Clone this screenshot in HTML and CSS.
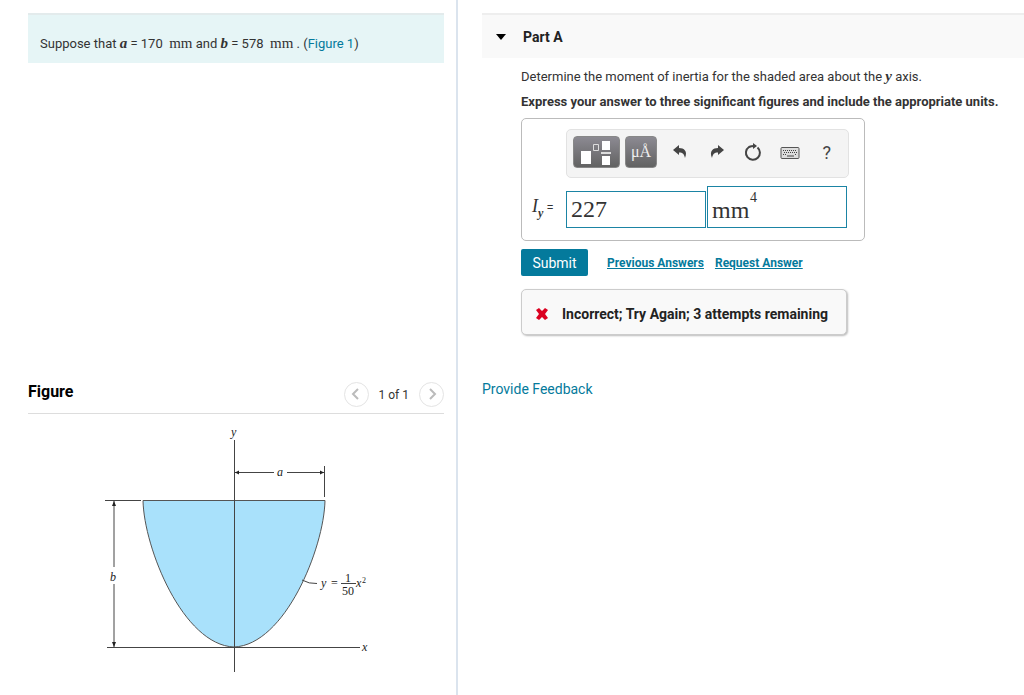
FILE: index.html
```html
<!DOCTYPE html>
<html lang="en">
<head>
  <meta charset="UTF-8">
  <meta name="viewport" content="width=device-width, initial-scale=1.0">
  <title>Moment of Inertia - Part A</title>
  <link rel="stylesheet" href="styles.css">
</head>
<body>
  <div class="page">
    <section class="left">
      <p class="problem">Suppose that <i class="var">a</i> = 170 &nbsp;<span class="unit">mm</span> and <i class="var">b</i> = 578 &nbsp;<span class="unit">mm</span> . (<a href="#figure">Figure 1</a>)</p>

      <div class="figure" id="figure">
        <div class="figure-header">
          <h2>Figure</h2>
          <div class="pager">
            <button type="button" aria-label="Previous figure">
              <svg width="10" height="12" viewBox="0 0 10 12"><path d="M7 1 L2 6 L7 11"/></svg>
            </button>
            <span>1 of 1</span>
            <button type="button" aria-label="Next figure">
              <svg width="10" height="12" viewBox="0 0 10 12"><path d="M3 1 L8 6 L3 11"/></svg>
            </button>
          </div>
        </div>

        <svg class="diagram" viewBox="0 0 416 275">
          <!-- shaded area -->
          <path class="area" d="M115 86.500 C116 134 155 231 206 233 C257 231 296 134 297 86.500 Z"/>
          <!-- axes -->
          <path class="line" d="M206.500 26 V258 M79 233.500 H332"/>
          <!-- dimension a -->
          <path class="line" d="M207 58.500 H246 M259 58.500 H297 M296.500 52 V83"/>
          <path class="tip" d="M207 58.500 l4 -2 v4 z M296 58.500 l-4 -2 v4 z"/>
          <!-- dimension b -->
          <path class="line" d="M77 86.500 H113 M86 87 V153 M86 170 V233"/>
          <path class="tip" d="M86 87 l-2 5 h4 z M86 233 l-2 -5 h4 z"/>
          <!-- leader to the equation -->
          <path class="line" d="M274 166 Q281 170 289 169.500"/>
          <text class="it" x="203" y="22">y</text>
          <text class="it" x="249" y="62">a</text>
          <text class="it" x="82" y="167">b</text>
          <text class="it" x="334" y="237">x</text>
          <text class="it" x="293" y="173">y</text>
          <text x="303" y="173">=</text>
          <text x="317" y="168">1</text>
          <path class="line" d="M313 169.500 H328"/>
          <text x="314" y="181">50</text>
          <text class="it" x="328" y="173">x</text>
          <text class="sup" x="334" y="169">2</text>
        </svg>
      </div>
    </section>

    <section class="right">
      <h2 class="part-header">
        <svg width="10" height="6" viewBox="0 0 10 6"><path d="M0 0 H10 L5 6 Z"/></svg>
        Part A
      </h2>

      <form class="part" onsubmit="return false">
        <p>Determine the moment of inertia for the shaded area about the <i class="var">y</i> axis.</p>
        <p class="instructions">Express your answer to three significant figures and include the appropriate units.</p>

        <div class="answer-box">
          <label class="answer-label" for="value"><i>I<sub>y</sub></i> =</label>
          <div class="toolbar">
            <button type="button" class="dark wide" aria-label="Templates">
              <svg width="32" height="26" viewBox="0 0 32 26">
                <path fill="#fff" d="M0 12 h10 v13 h-10 z M21 2 h8 v9 h-8 z M21 17 h8 v9 h-8 z"/>
                <path fill="#ddd" d="M20 13 h10 v2 h-10 z"/>
                <path fill="none" stroke="#ddd" d="M12.500 5.500 h5 v6 h-5 z"/>
              </svg>
            </button>
            <button type="button" class="dark units" aria-label="Units">μÅ</button>
            <button type="button" class="tool" aria-label="Undo">
              <svg width="18" height="18" viewBox="0 0 18 18"><path d="M2 7 L8 2 V5 C13 5 17 8 14 15 C13 11 12 9.500 8 9.500 V12 Z"/></svg>
            </button>
            <button type="button" class="tool" aria-label="Redo">
              <svg width="18" height="18" viewBox="0 0 18 18"><path d="M16 7 L10 2 V5 C5 5 1 8 4 15 C5 11 6 9.500 10 9.500 V12 Z"/></svg>
            </button>
            <button type="button" class="tool" aria-label="Reset">
              <svg width="18" height="18" viewBox="0 0 18 18"><path class="ring" d="M13.500 4.500 A7 7 0 1 1 5 4 Q7 3 10 3"/><path d="M9 0 L13 3 L9 6 Z"/></svg>
            </button>
            <button type="button" class="tool" aria-label="Keyboard">
              <svg width="20" height="18" viewBox="0 0 20 18">
                <rect x="1" y="4.500" width="18" height="11" rx="1" fill="#ddd" stroke="#555"/>
                <path class="keys" d="M3 7.500 H17 M4 9.500 H17 M3 11.500 H6 M15 11.500 H17"/>
                <path class="space" d="M7 13 H14"/>
              </svg>
            </button>
            <button type="button" class="tool" aria-label="Help">?</button>
          </div>
          <div class="fields">
            <input type="text" class="value" id="value" value="227">
            <div class="units-field">
              <input type="text" value="mm" aria-label="Units">
              <sup>4</sup>
            </div>
          </div>
        </div>

        <div class="actions">
          <button type="submit" class="submit">Submit</button>
          <a href="#previous">Previous Answers</a>
          <a href="#request">Request Answer</a>
        </div>

        <div class="result">
          <svg width="14" height="14" viewBox="0 0 14 14"><path d="M1 3 L4 1 L7 4 L10 1 L13 3 L10 7 L13 11 L10 13 L7 10 L4 13 L1 11 L4 7 Z"/></svg>
          Incorrect; Try Again; 3 attempts remaining
        </div>
      </form>

      <a class="feedback" href="#feedback">Provide Feedback</a>
    </section>
  </div>
</body>
</html>
```
FILE: styles.css
```css
* {
  box-sizing: border-box;
}

body {
  margin: 0;
  background-color: #fff;
  color: #333;
  font-family: Roboto, "Liberation Sans", Arial, sans-serif;
  font-size: 13px;
  line-height: 20px;
}

h2, p {
  margin: 0;
}

a {
  color: #047a9c;
}

button, input {
  font-family: inherit;
  padding: 0;
}

.page {
  display: grid;
  grid-template-columns: 458fr 566fr;
  min-height: 100vh;
}

/* Left column */
.left {
  display: flex;
  flex-direction: column;
  justify-content: space-between;
  padding: 13px 12px 6px 28px;
  border-right: 2px solid #dbe4ee;
}

.problem {
  background-color: #e6f5f6;
  border-top: 2px solid #e3ebec;
  padding: 19px 12px 9px;
}

.problem a {
  text-decoration: none;
}

.var, .unit {
  font-family: "Liberation Serif", "Times New Roman", serif;
  font-size: 15px;
  line-height: 1;
}

.var {
  font-weight: bold;
}

.figure-header {
  display: flex;
  justify-content: space-between;
  height: 36px;
  border-bottom: 1px solid #ddd;
}

.figure-header h2 {
  color: #000;
  font-size: 16px;
  line-height: 28px;
}

.pager {
  display: flex;
  align-items: center;
  gap: 10px;
  height: 32px;
  font-size: 12px;
}

.pager span {
  padding-top: 2px;
}

.pager button {
  display: flex;
  align-items: center;
  justify-content: center;
  width: 25px;
  height: 25px;
  background-color: #fff;
  border: 1px solid #e4e4e4;
  border-radius: 50%;
}

.pager path {
  fill: none;
  stroke: #bbb;
  stroke-width: 2;
}

.diagram {
  display: block;
  width: 100%;
}

.diagram text {
  fill: #222;
  font-family: "Liberation Serif", "Times New Roman", serif;
  font-size: 12px;
}

.diagram .it {
  font-style: italic;
}

.diagram .sup {
  font-size: 8px;
}

.area {
  fill: #a9e1fb;
  stroke: #555;
}

.line {
  fill: none;
  stroke: #444;
}

.tip {
  fill: #222;
}

/* Right column */
.right {
  min-width: 0;
  padding: 13px 0 0 24px;
}

.part-header {
  display: flex;
  align-items: center;
  gap: 17px;
  height: 45px;
  padding-left: 14px;
  background-color: #f9f9f9;
  border-top: 2px solid #eee;
  color: #222;
  font-size: 14px;
}

.part {
  padding: 9px 0 0 39px;
}

.instructions {
  margin-top: 5px;
  font-weight: bold;
}

.answer-box {
  display: grid;
  grid-template-columns: 34px minmax(0, 1fr);
  row-gap: 8px;
  max-width: 344px;
  margin-top: 6px;
  padding: 10px 15px 12px 10px;
  border: 1px solid #bbb;
  border-radius: 5px;
}

.answer-label {
  grid-row: 2;
  align-self: center;
}

.answer-label i {
  font-family: "Liberation Serif", "Times New Roman", serif;
  font-size: 18px;
}

.answer-label sub {
  font-size: 12px;
  font-weight: bold;
  line-height: 1;
}

.toolbar {
  grid-column: 2;
  display: flex;
  align-items: center;
  height: 49px;
  padding: 0 3px 3px 6px;
  background-color: #f4f4f4;
  border: 1px solid #e2e2e2;
  border-radius: 5px;
}

.dark {
  display: flex;
  align-items: center;
  justify-content: center;
  width: 32px;
  height: 32px;
  margin-right: 5px;
  background: linear-gradient(#8c8a92, #626262);
  border: 1px solid #888;
  border-radius: 4px;
  color: #eee;
}

.wide {
  width: 47px;
}

.units {
  font-family: "Liberation Serif", "Times New Roman", serif;
  font-size: 16px;
}

.tool {
  flex: 1;
  display: flex;
  align-items: center;
  justify-content: center;
  height: 32px;
  background: none;
  border: 0;
  color: #444;
  font-size: 18px;
}

.tool path {
  fill: #444;
}

.tool .ring, .tool .keys, .tool .space {
  fill: none;
  stroke: #444;
}

.tool .ring {
  stroke-width: 2;
}

.tool .keys {
  stroke-dasharray: 1 1;
}

.fields {
  grid-column: 2;
  display: flex;
  align-items: flex-end;
  gap: 1px;
  padding-right: 2px;
}

.value, .units-field {
  flex: 1 1 0;
  min-width: 0;
  border: 1px solid #1b84a4;
  background-color: #fff;
}

.value, .units-field input {
  color: #333;
  font-family: "Liberation Serif", "Times New Roman", serif;
  font-size: 24px;
}

.value {
  height: 37px;
  padding-left: 4px;
}

.units-field {
  display: flex;
  height: 42px;
  padding-left: 4px;
}

.units-field input {
  width: 38px;
  padding-top: 6px;
  border: 0;
  background: none;
}

.units-field sup {
  font-family: "Liberation Serif", "Times New Roman", serif;
  font-size: 14px;
  line-height: 22px;
}

.actions {
  display: flex;
  align-items: center;
  gap: 11px;
  margin-top: 8px;
}

.actions a {
  font-size: 12px;
  font-weight: bold;
}

.submit {
  width: 67px;
  height: 27px;
  margin-right: 8px;
  background-color: #047a9c;
  border: 0;
  border-radius: 2px;
  color: #fff;
  font-size: 14px;
}

.result {
  display: flex;
  align-items: center;
  gap: 13px;
  max-width: 326px;
  height: 46px;
  margin-top: 13px;
  padding: 3px 13px 0;
  background-color: #f9f9f9;
  border: 1px solid #ccc;
  border-radius: 5px;
  box-shadow: 1px 1px 2px #bbb;
  color: #222;
  font-size: 14px;
  font-weight: bold;
}

.result path {
  fill: #db0020;
}

.feedback {
  display: inline-block;
  margin-top: 44px;
  font-size: 14px;
  text-decoration: none;
}
```
